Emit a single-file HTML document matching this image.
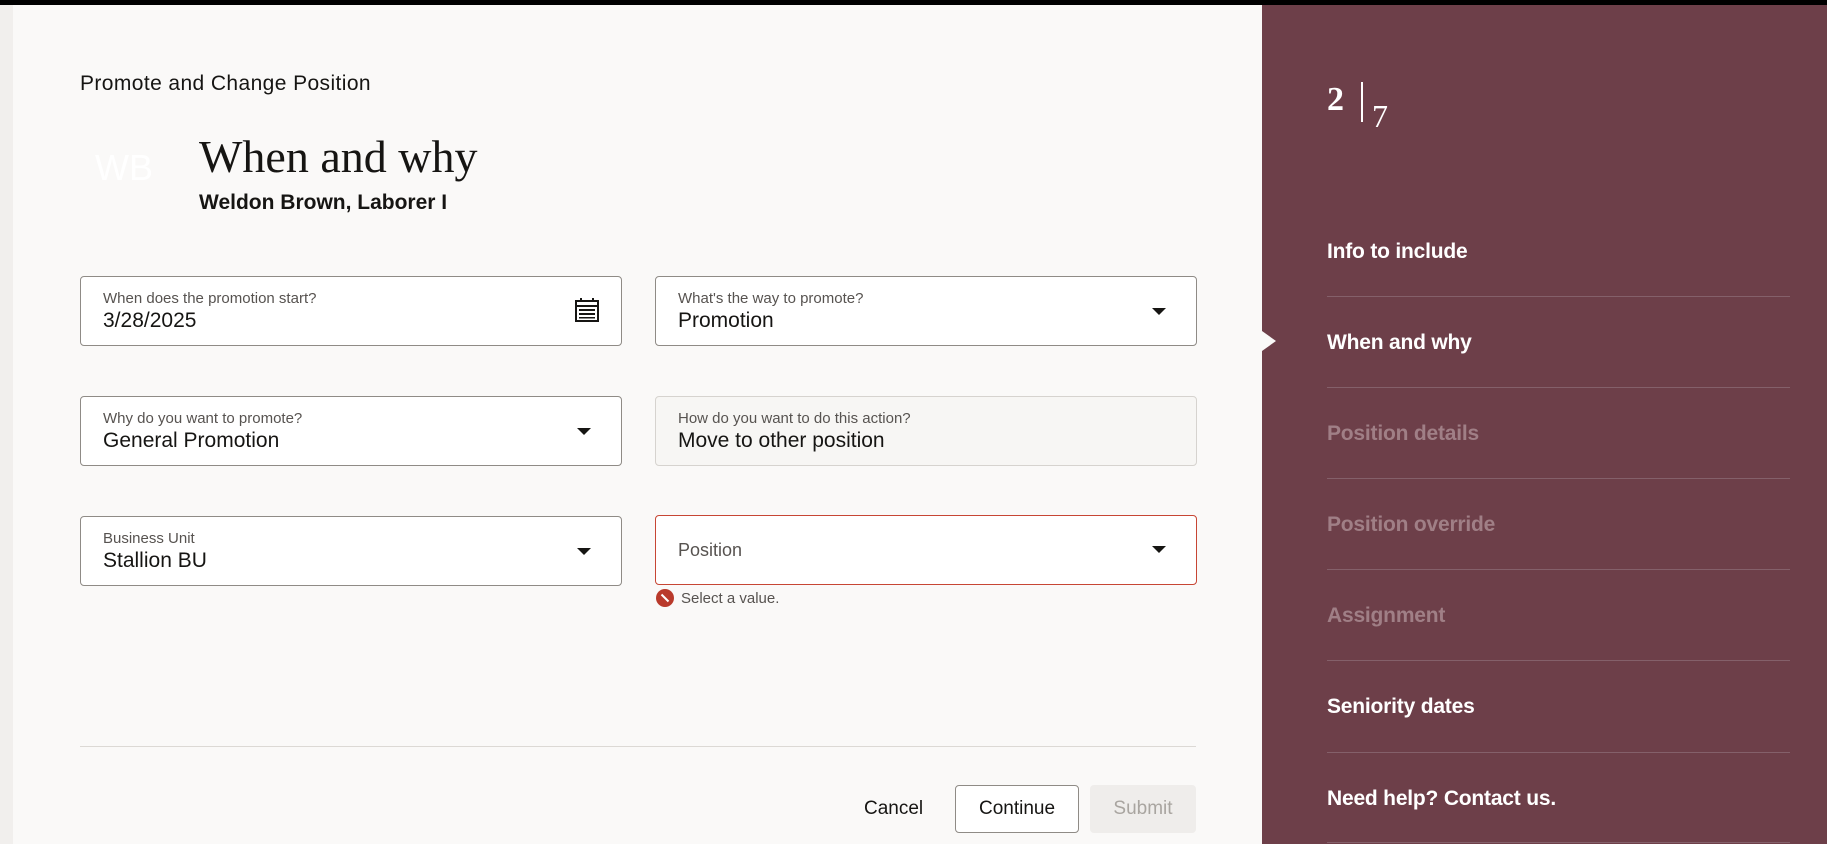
<!DOCTYPE html>
<html><head><meta charset="utf-8"><style>
*{margin:0;padding:0;box-sizing:border-box}
body{width:1827px;height:844px;overflow:hidden;background:#faf9f8;font-family:"Liberation Sans",sans-serif;position:relative;color:#161513}
.topbar{position:absolute;left:0;top:0;width:1827px;height:5px;background:#000}
.lstrip{position:absolute;left:0;top:5px;width:13px;height:839px;background:#f1efed}
.panel{position:absolute;left:1262px;top:5px;width:565px;height:839px;background:#6d3f49}
.abs{position:absolute}
.field{position:absolute;width:542px;height:70px;border:1px solid #8f8b86;border-radius:4px;background:#fff}
.field .lbl{position:absolute;left:22px;top:13px;font-size:15px;color:#575350}
.field .val{position:absolute;left:22px;top:32px;font-size:21px;color:#161513}
.caret{position:absolute;right:30px;top:31px;width:0;height:0;border-left:7px solid transparent;border-right:7px solid transparent;border-top:7px solid #161513}
.nav{position:absolute;left:1327px;font-size:21px;font-weight:bold;color:#fff;letter-spacing:-0.2px}
.nav.dim{color:#a07f86}
.sep{position:absolute;left:1327px;width:463px;height:1px;background:#84606a}
</style></head><body>
<div class="topbar"></div>
<div class="lstrip"></div>
<div class="abs" style="left:80px;top:72px;font-size:21px;letter-spacing:0.4px">Promote and Change Position</div>
<div class="abs" style="left:95px;top:147px;font-size:36px;color:#fff">WB</div>
<div class="abs" style="left:199px;top:130px;font-family:'Liberation Serif',serif;font-size:46px">When and why</div>
<div class="abs" style="left:199px;top:191px;font-size:21px;font-weight:bold">Weldon Brown, Laborer I</div>

<div class="field" style="left:80px;top:276px"><div class="lbl">When does the promotion start?</div><div class="val">3/28/2025</div>
<svg class="abs" style="left:493px;top:20px" width="26" height="26" viewBox="0 0 26 26"><rect x="2" y="4" width="22" height="20" fill="none" stroke="#161513" stroke-width="2"/><line x1="2" y1="9" x2="24" y2="9" stroke="#161513" stroke-width="2"/><line x1="7" y1="1" x2="7" y2="5" stroke="#161513" stroke-width="2"/><line x1="19" y1="1" x2="19" y2="5" stroke="#161513" stroke-width="2"/><g fill="#161513"><rect x="5" y="12" width="16" height="2"/><rect x="5" y="16" width="16" height="2"/><rect x="5" y="20" width="16" height="1.5"/></g></svg></div>
<div class="field" style="left:655px;top:276px"><div class="lbl">What's the way to promote?</div><div class="val">Promotion</div><div class="caret"></div></div>

<div class="field" style="left:80px;top:396px"><div class="lbl">Why do you want to promote?</div><div class="val">General Promotion</div><div class="caret"></div></div>
<div class="field" style="left:655px;top:396px;background:#f7f6f4;border-color:#d6d3cf"><div class="lbl">How do you want to do this action?</div><div class="val">Move to other position</div></div>

<div class="field" style="left:80px;top:516px"><div class="lbl">Business Unit</div><div class="val">Stallion BU</div><div class="caret"></div></div>
<div class="field" style="left:655px;top:515px;border-color:#c74634"><div class="lbl" style="top:24px;font-size:18px">Position</div><div class="caret" style="top:30px"></div></div>
<svg class="abs" style="left:655px;top:588px" width="20" height="20"><circle cx="10" cy="10" r="9" fill="#b93a2b"/><line x1="6.5" y1="6.5" x2="13.5" y2="13.5" stroke="#fff" stroke-width="2"/></svg>
<div class="abs" style="left:681px;top:590px;font-size:15px;color:#575350">Select a value.</div>

<div class="abs" style="left:80px;top:746px;width:1116px;height:1px;background:#dcd9d5"></div>
<div class="abs" style="left:864px;top:798px;font-size:19px">Cancel</div>
<div class="abs" style="left:955px;top:785px;width:124px;height:48px;border:1px solid #8f8b86;border-radius:4px;background:#fff;font-size:19px;text-align:center;line-height:46px">Continue</div>
<div class="abs" style="left:1090px;top:785px;width:106px;height:48px;border-radius:4px;background:#efedeb;font-size:19px;text-align:center;line-height:48px;color:#a9a5a0">Submit</div>

<div class="panel"></div>
<div class="abs" style="left:1262px;top:331px;width:0;height:0;border-top:10px solid transparent;border-bottom:10px solid transparent;border-left:14px solid #faf9f8"></div>
<div class="abs" style="left:1327px;top:81px;font-family:'Liberation Serif',serif;font-size:34px;font-weight:bold;color:#fff">2</div>
<div class="abs" style="left:1361px;top:82px;width:2px;height:40px;background:#fff"></div>
<div class="abs" style="left:1372px;top:98px;font-family:'Liberation Serif',serif;font-size:32px;color:#fff">7</div>
<div class="nav" style="top:240px">Info to include</div><div class="sep" style="top:296px"></div>
<div class="nav" style="top:331px">When and why</div><div class="sep" style="top:387px"></div>
<div class="nav dim" style="top:422px">Position details</div><div class="sep" style="top:478px"></div>
<div class="nav dim" style="top:513px">Position override</div><div class="sep" style="top:569px"></div>
<div class="nav dim" style="top:604px">Assignment</div><div class="sep" style="top:660px"></div>
<div class="nav" style="top:695px">Seniority dates</div><div class="sep" style="top:752px"></div>
<div class="nav" style="top:787px">Need help? Contact us.</div><div class="sep" style="top:842px"></div>
</body></html>
